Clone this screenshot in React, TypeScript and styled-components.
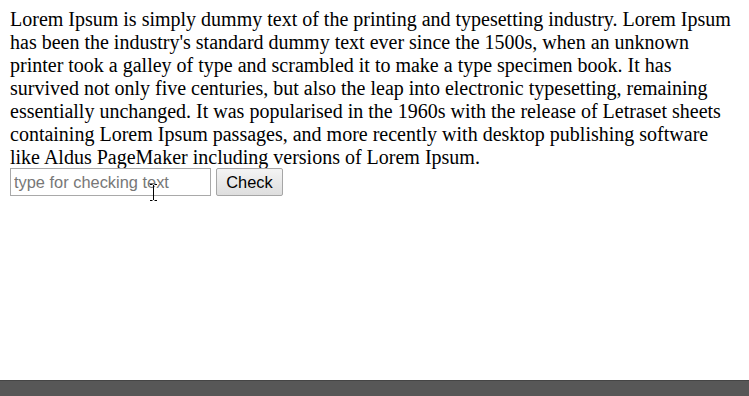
import React from 'react';
import styled, { createGlobalStyle } from 'styled-components';

const GlobalStyle = createGlobalStyle`
  html, body {
    margin: 0;
    padding: 0;
    background: #fff;
  }
`;

const Page = styled.div`
  display: flex;
  flex-direction: column;
  min-height: 100vh;
`;

const Content = styled.main`
  flex: 1;
  padding: 8px 10px 0 10px;
  font-family: 'Liberation Serif', 'Times New Roman', serif;
  font-size: 20px;
  color: #000;
`;

const Paragraph = styled.p`
  margin: 0;
  line-height: 23px;
`;

const CheckForm = styled.form`
  display: flex;
  align-items: flex-start;
  gap: 5px;
  margin-top: -1px;
  position: relative;
`;

const TextInput = styled.input`
  box-sizing: border-box;
  width: 201px;
  height: 28px;
  margin: 0;
  padding: 1px 3px;
  border: 1px solid #a9a9a9;
  font-family: 'Liberation Sans', Arial, sans-serif;
  font-size: 16.4px;
  color: #000;
  outline: none;

  &::placeholder {
    color: #777;
  }
`;

const CheckButton = styled.button`
  box-sizing: border-box;
  width: 67px;
  height: 28px;
  margin: 0;
  padding: 0 6px;
  border: 1px solid #a6a6a6;
  border-radius: 2px;
  background: linear-gradient(#f4f4f4, #dedede);
  font-family: 'Liberation Sans', Arial, sans-serif;
  font-size: 16.4px;
  color: #000;
`;

const Cursor = styled.svg`
  position: absolute;
  left: 139px;
  top: 16px;
  pointer-events: none;
`;

const BottomBar = styled.footer`
  height: 16px;
  background: #575757;
  border-top: 1px solid #454545;
  box-sizing: border-box;
`;

const text =
  "Lorem Ipsum is simply dummy text of the printing and typesetting industry. Lorem Ipsum has been the industry's standard dummy text ever since the 1500s, when an unknown printer took a galley of type and scrambled it to make a type specimen book. It has survived not only five centuries, but also the leap into electronic typesetting, remaining essentially unchanged. It was popularised in the 1960s with the release of Letraset sheets containing Lorem Ipsum passages, and more recently with desktop publishing software like Aldus PageMaker including versions of Lorem Ipsum.";

const App: React.FC = () => {
  return (
    <Page>
      <GlobalStyle />
      <Content>
        <Paragraph>{text}</Paragraph>
        <CheckForm onSubmit={(e) => e.preventDefault()}>
          <TextInput type="text" placeholder="type for checking text" />
          <CheckButton type="submit">Check</CheckButton>
          <Cursor width="9" height="17" viewBox="0 0 9 17">
            <path d="M1 0.5h2.5M5.5 0.5H8M4.5 1v15M1 16.5h2.5M5.5 16.5H8" stroke="#000" strokeWidth="1" fill="none" />
          </Cursor>
        </CheckForm>
      </Content>
      <BottomBar />
    </Page>
  );
};

export default App;
